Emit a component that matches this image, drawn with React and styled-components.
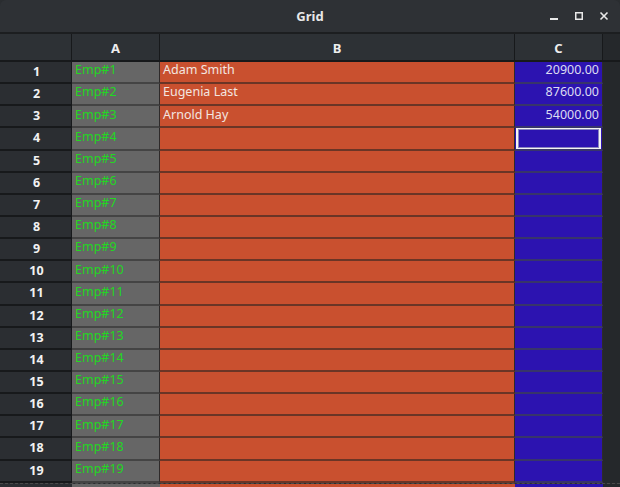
import React from "react";
import styled, { createGlobalStyle } from "styled-components";

const Global = createGlobalStyle`
  html, body { margin: 0; padding: 0; background: #2a2d30; }
  body { font-family: "Noto Sans", "Open Sans", "DejaVu Sans", sans-serif; }
`;

const Window = styled.div`
  width: 620px;
  height: 487px;
  display: flex;
  flex-direction: column;
  background: #2a2d30;
  overflow: hidden;
  border-radius: 6px 6px 0 0;
`;

const TitleBar = styled.div`
  height: 34px;
  flex: none;
  display: grid;
  grid-template-columns: 1fr auto 1fr;
  align-items: center;
  background: #2e3135;
  border-bottom: 2px solid #1c1e20;
  box-sizing: border-box;
  color: #e6e6e6;
`;

const Title = styled.div`
  grid-column: 2;
  font-size: 13px;
  font-weight: 700;
  color: #e8e8e8;
`;

const Controls = styled.div`
  grid-column: 3;
  justify-self: end;
  display: flex;
  align-items: center;
  gap: 13px;
  padding-right: 10px;
`;

const CtrlBtn = styled.div`
  width: 12px;
  height: 12px;
  display: flex;
  align-items: center;
  justify-content: center;
`;

const Sheet = styled.div`
  display: grid;
  grid-template-columns: 72px 88px 355px 88px 17px;
  grid-template-rows: 28px;
  grid-auto-rows: 22.15px;
  flex: none;
`;

const HeadCell = styled.div`
  box-sizing: border-box;
  background: ${p => (p.$filler ? "#25282b" : "#2d3135")};
  border-right: ${p => (p.$filler ? "none" : "1px solid #17191b")};
  border-bottom: 2px solid #17191b;
  color: #eeeeee;
  font-size: 13px;
  font-weight: 700;
  display: flex;
  align-items: center;
  justify-content: center;
  padding-top: 1px;
`;

const RowHead = styled.div`
  box-sizing: border-box;
  background: #2b2e32;
  border-right: 1px solid #17191b;
  border-bottom: 2px solid #17191b;
  color: #f2f2f2;
  font-size: 12.5px;
  font-weight: 700;
  display: flex;
  align-items: center;
  justify-content: center;
  padding-left: 2px;
  padding-bottom: 1px;
`;

const palettes = {
  a: { bg: "#666666", fg: "#22d822", line: "#444444" },
  b: { bg: "#c9502f", fg: "#f3e6e0", line: "#6a3526" },
  c: { bg: "#2c13b0", fg: "#dcdcf2", line: "#38356a" },
};

const Cell = styled.div`
  position: relative;
  box-sizing: border-box;
  background: ${p => palettes[p.$col].bg};
  color: ${p => palettes[p.$col].fg};
  border-right: 1px solid #2e2a2a;
  border-bottom: 2px solid ${p => palettes[p.$col].line};
  font-size: 12.5px;
  line-height: 1;
  display: flex;
  align-items: center;
  justify-content: ${p => (p.$col === "c" ? "flex-end" : "flex-start")};
  padding: 0 ${p => (p.$col === "c" ? "3px" : "0")} 3px ${p => (p.$col === "c" ? "0" : "3px")};
  white-space: nowrap;
  overflow: hidden;
`;

const Selected = styled.div`
  position: absolute;
  left: 1px;
  top: -1px;
  right: 1px;
  bottom: -1px;
  border: 2px solid #f4f4f4;
  box-shadow: inset 0 0 0 1px #8a86c0;
  pointer-events: none;
`;

const Filler = styled.div`
  background: #25282b;
`;

const BottomEdge = styled.div`
  flex: 1;
  display: grid;
  grid-template-columns: 72px 88px 355px 88px 17px;
  border-top: 1px dashed #4a4a4a;
`;

const EdgePart = styled.div`
  background: ${p => p.$bg};
`;

const names = ["Adam Smith", "Eugenia Last", "Arnold Hay"];
const salaries = ["20900.00", "87600.00", "54000.00"];

export default function App() {
  const rows = Array.from({ length: 19 }, (_, i) => i);
  return (
    <>
      <Global />
      <Window>
        <TitleBar>
          <Title>Grid</Title>
          <Controls>
            <CtrlBtn>
              <svg width="10" height="10" viewBox="0 0 10 10">
                <rect x="1" y="7" width="8" height="2" fill="#e8e8e8" />
              </svg>
            </CtrlBtn>
            <CtrlBtn>
              <svg width="10" height="10" viewBox="0 0 10 10">
                <rect x="1.75" y="1.75" width="6.5" height="6.5" fill="none" stroke="#e8e8e8" strokeWidth="1.5" />
              </svg>
            </CtrlBtn>
            <CtrlBtn>
              <svg width="10" height="10" viewBox="0 0 10 10">
                <path d="M1.5 1.5 L8.5 8.5 M8.5 1.5 L1.5 8.5" stroke="#e8e8e8" strokeWidth="1.6" />
              </svg>
            </CtrlBtn>
          </Controls>
        </TitleBar>
        <Sheet>
          <HeadCell />
          <HeadCell>A</HeadCell>
          <HeadCell>B</HeadCell>
          <HeadCell>C</HeadCell>
          <HeadCell $filler />
          {rows.map(i => (
            <React.Fragment key={i}>
              <RowHead>{i + 1}</RowHead>
              <Cell $col="a">Emp#{i + 1}</Cell>
              <Cell $col="b">{names[i] || ""}</Cell>
              <Cell $col="c">
                {salaries[i] || ""}
                {i === 3 && <Selected />}
              </Cell>
              <Filler />
            </React.Fragment>
          ))}
        </Sheet>
        <BottomEdge>
          <EdgePart $bg="#2b2e32" />
          <EdgePart $bg="#666666" />
          <EdgePart $bg="#c9502f" />
          <EdgePart $bg="#2c13b0" />
          <EdgePart $bg="#25282b" />
        </BottomEdge>
      </Window>
    </>
  );
}
